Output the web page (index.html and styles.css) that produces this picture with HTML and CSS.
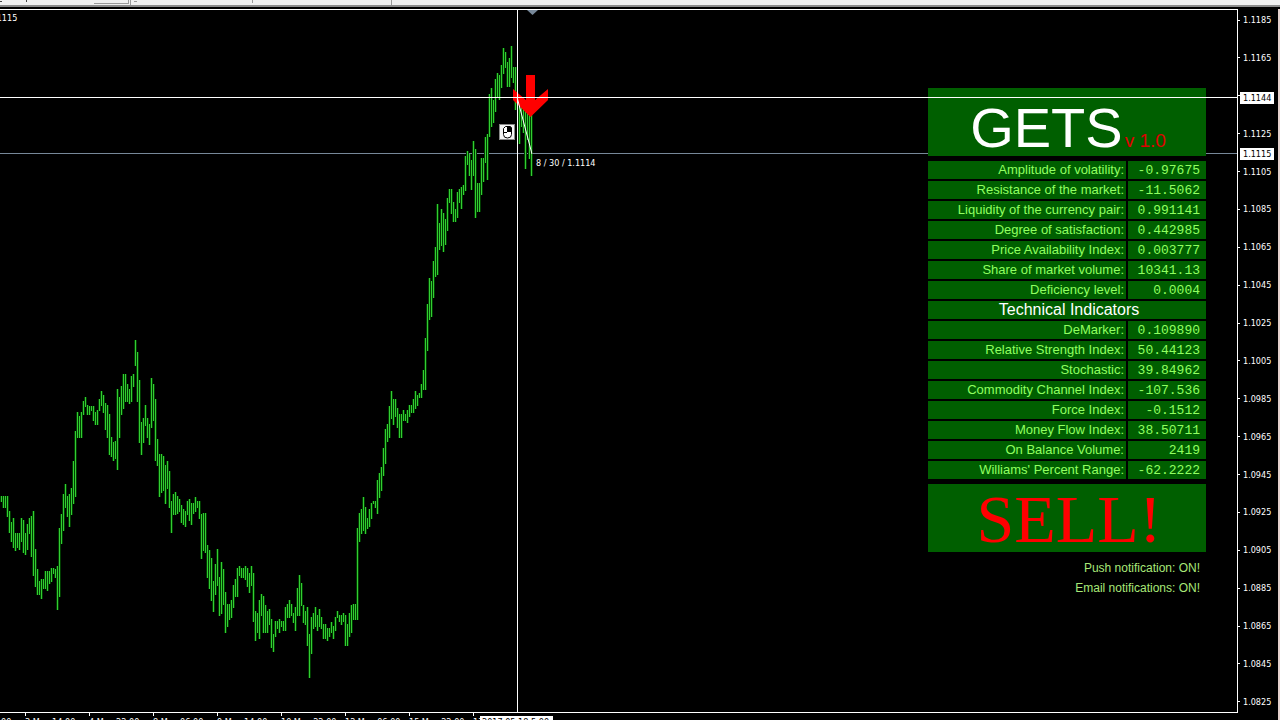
FILE: index.html
```
<!DOCTYPE html>
<html lang="en">
<head>
    <meta charset="UTF-8">
    <meta name="viewport" content="width=device-width, initial-scale=1.0">
    <title>GETS v 1.0</title>
    <link rel="stylesheet" href="styles.css">
</head>
<body>

    <!-- Bottom edge of the toolbar -->
    <div class="toolbar">
        <svg class="toolbar-marks" width="400" height="5" shape-rendering="crispEdges">
            <rect x="0" y="1" width="2" height="1" fill="#444"/>
            <rect x="26" y="0" width="1" height="2" fill="#444"/>
            <path d="M94 3.5H128.500V0" fill="none" stroke="#999"/>
            <path d="M130.500 0V5M252.500 0V3M391.500 0V5" stroke="#999"/>
            <rect x="134" y="1" width="3" height="1" fill="#999"/>
        </svg>
    </div>

    <div class="workspace">
        <main class="plot">
            <span class="ohlc">1.1115</span>

            <div class="bid-line"></div>

            <svg class="bars" width="620" height="702" viewBox="0 10 620 702">
                <path id="glow" class="bar-glow"/>
                <path id="bars" class="bar-path"/>
                <path d="M527 10H538L532.500 15Z" fill="#778899"/>
                <path d="M526 75H535V100L548 89V100L530.500 117L513 100V89L526 100Z" fill="#f00"/>
                <path d="M517 97L532 154" stroke="#fff"/>
                <!-- Mouse badge -->
                <rect x="499.500" y="124.500" width="15" height="15" fill="#f4f4f4" stroke="#888"/>
                <path d="M503.500 128.500L505.500 126.500H510.500L511.500 127.500V134.500Q511.500 138 507.500 138Q503.500 138 503.500 134.500Z" fill="#fff" stroke="#000"/>
                <path d="M507 127H511V132H507Z" fill="#000"/>
                <path d="M504 132.500H507" stroke="#000"/>
            </svg>

            <span class="measure">8 / 30 / 1.1114</span>

            <!-- Indicator panel -->
            <section class="panel">
                <h1 class="panel-title">GETS<small>v 1.0</small></h1>
                <table class="readings">
                    <tbody>
                        <tr><th scope="row">Amplitude of volatility:</th><td>-0.97675</td></tr>
                        <tr><th scope="row">Resistance of the market:</th><td>-11.5062</td></tr>
                        <tr><th scope="row">Liquidity of the currency pair:</th><td>0.991141</td></tr>
                        <tr><th scope="row">Degree of satisfaction:</th><td>0.442985</td></tr>
                        <tr><th scope="row">Price Availability Index:</th><td>0.003777</td></tr>
                        <tr><th scope="row">Share of market volume:</th><td>10341.13</td></tr>
                        <tr><th scope="row">Deficiency level:</th><td>0.0004</td></tr>
                        <tr><th class="group" colspan="2">Technical Indicators</th></tr>
                        <tr><th scope="row">DeMarker:</th><td>0.109890</td></tr>
                        <tr><th scope="row">Relative Strength Index:</th><td>50.44123</td></tr>
                        <tr><th scope="row">Stochastic:</th><td>39.84962</td></tr>
                        <tr><th scope="row">Commodity Channel Index:</th><td>-107.536</td></tr>
                        <tr><th scope="row">Force Index:</th><td>-0.1512</td></tr>
                        <tr><th scope="row">Money Flow Index:</th><td>38.50711</td></tr>
                        <tr><th scope="row">On Balance Volume:</th><td>2419</td></tr>
                        <tr><th scope="row">Williams' Percent Range:</th><td>-62.2222</td></tr>
                    </tbody>
                </table>
                <div class="signal">SELL!</div>
                <p class="notice">Push notification: ON!</p>
                <p class="notice">Email notifications: ON!</p>
            </section>

            <!-- Crosshair -->
            <div class="cross-h"></div>
            <div class="cross-v"></div>
        </main>

        <aside class="price-axis">
            <ul class="prices">
                <li>1.1185</li>
                <li>1.1165</li>
                <li></li>
                <li>1.1125</li>
                <li>1.1105</li>
                <li>1.1085</li>
                <li>1.1065</li>
                <li>1.1045</li>
                <li>1.1025</li>
                <li>1.1005</li>
                <li>1.0985</li>
                <li>1.0965</li>
                <li>1.0945</li>
                <li>1.0925</li>
                <li>1.0905</li>
                <li>1.0885</li>
                <li>1.0865</li>
                <li>1.0845</li>
                <li>1.0825</li>
            </ul>
            <span class="price-tag tag-cross">1.1144</span>
            <span class="price-tag tag-bid">1.1115</span>
        </aside>

        <footer class="time-axis">
            <span>2 May 06:00</span>
            <span>3 May 14:00</span>
            <span>4 May 22:00</span>
            <span>8 May 06:00</span>
            <span>9 May 14:00</span>
            <span>10 May 22:00</span>
            <span>12 May 06:00</span>
            <span>15 May 22:00</span>
            <span>17</span>
            <span class="time-tag">2017.05.18 5:00</span>
        </footer>
    </div>

    <script src="chart.js"></script>
</body>
</html>
```
FILE: styles.css
```
/* General */
* {
    box-sizing: border-box;
}

body {
    display: flex;
    flex-direction: column;
    height: 100vh;
    margin: 0;
    overflow: hidden;
    background: #000;
    color: #fff;
    font-family: "Liberation Sans", Arial, sans-serif;
}

/* Toolbar */
.toolbar {
    flex: none;
    height: 7px;
    margin-bottom: 2px;
    background: #f0f0f0;
    border-bottom: 2px solid #8c8c8c;
}

.toolbar-marks {
    display: block;
}

/* Workspace */
.workspace {
    flex: 1;
    display: grid;
    grid-template-columns: 1fr 42px;
    grid-template-rows: 1fr 7px;
    min-height: 0;
}

.plot {
    position: relative;
    display: flex;
    justify-content: flex-end;
    padding: 78px 31px 0 0;
    border: 1px solid #fff;
    border-left: 0;
    overflow: hidden;
}

.bars {
    position: absolute;
    left: 0;
    top: 0;
}

.bar-path,
.bar-glow {
    fill: none;
    stroke: #32cd32;
    shape-rendering: crispEdges;
}

.bar-glow {
    stroke: #003c00;
    stroke-width: 3px;
}

.ohlc,
.measure {
    position: absolute;
    font-family: "DejaVu Sans Condensed", "Noto Sans", sans-serif;
    font-size: 9px;
    line-height: 12px;
}

.ohlc {
    left: -11px;
    top: 2px;
}

.measure {
    left: 536px;
    top: 147px;
}

.bid-line,
.cross-h {
    position: absolute;
    left: 0;
    right: 0;
    height: 1px;
}

.bid-line {
    top: 143px;
    background: #778899;
}

.cross-h {
    top: 87px;
    background: #fff;
}

.cross-v {
    position: absolute;
    left: 517px;
    top: 0;
    bottom: 0;
    width: 1px;
    background: #fff;
}

/* Indicator panel */
.panel {
    position: relative;
    width: 278px;
}

.panel-title,
.signal {
    height: 68px;
    margin: 0;
    background: #005f00;
    text-align: center;
}

.panel-title {
    margin-bottom: 5px;
    padding-left: 2px;
    font-size: 56px;
    font-weight: normal;
    line-height: 80px;
}

.panel-title small {
    margin-left: 2px;
    color: #e00000;
    font-size: 19px;
}

.readings {
    width: 100%;
    border-spacing: 0;
    table-layout: fixed;
    color: #90ff60;
    font-size: 13px;
    line-height: 18px;
    text-align: right;
}

.readings th,
.readings td {
    height: 20px;
    padding: 0;
    background: #005f00;
    border-bottom: 2px solid #000;
    font-weight: normal;
    white-space: nowrap;
}

.readings th {
    width: 200px;
    padding-right: 2px;
    border-right: 2px solid #000;
    text-align: right;
}

.readings td {
    padding: 2px 6px 0 0;
    font-family: "Liberation Mono", "Courier New", monospace;
    line-height: 16px;
}

.readings .group {
    padding-left: 6px;
    border-right: 0;
    color: #fff;
    font-size: 16px;
    text-align: center;
}

.signal {
    margin: 3px 0 6px;
    padding-left: 4px;
    color: #f00;
    font-family: "Liberation Serif", "Times New Roman", serif;
    font-size: 68px;
    line-height: 70px;
}

.notice {
    margin: 0;
    padding-right: 6px;
    color: #a8e878;
    font-size: 12px;
    line-height: 20px;
    text-align: right;
}

/* Price axis */
.price-axis {
    position: relative;
    grid-row: span 2;
    border-right: 2px solid #e4d0cc;
    font-family: "DejaVu Sans Condensed", "Noto Sans", sans-serif;
    font-size: 9px;
    line-height: 12px;
}

.prices {
    display: flex;
    flex-direction: column;
    justify-content: space-between;
    height: 100%;
    margin: 0;
    padding: 5px 0 12px;
    list-style: none;
}

.prices li {
    display: flex;
    align-items: center;
    gap: 3px;
    height: 12px;
}

.prices li::before {
    content: "";
    width: 2px;
    height: 1px;
    background: #fff;
}

.price-tag {
    position: absolute;
    left: 2px;
    width: 34px;
    padding-left: 3px;
    background: #fff;
    color: #000;
}

.tag-cross {
    top: 83px;
}

.tag-bid {
    top: 139px;
}

/* Time axis */
.time-axis {
    position: relative;
    display: flex;
    margin-left: -39px;
    overflow: hidden;
    font-family: "DejaVu Sans Condensed", "Noto Sans", sans-serif;
    font-size: 9px;
    line-height: 12px;
}

.time-axis span {
    flex: none;
    width: 64px;
    padding-top: 3px;
    white-space: nowrap;
    background: linear-gradient(#fff, #fff) no-repeat 0 0 / 1px 3px;
}

.time-axis .time-tag {
    position: absolute;
    left: 519px;
    top: 3px;
    width: 73px;
    padding: 0 2px;
    background: #fff;
    color: #000;
}
```
FILE: chart.js
```
// [high, low] of every bar, left to right
const bars = [
    [496,502],[496,508],[496,508],[496,517],[511,533],[522,542],[518,548],[533,551],[533,548],[533,550],
    [518,542],[520,553],[533,555],[524,550],[518,534],[516,557],[511,576],[549,587],[569,595],[581,595],
    [579,599],[579,589],[571,589],[571,591],[571,584],[568,582],[568,574],[569,578],[566,610],[528,597],
    [514,544],[494,531],[484,508],[496,517],[494,527],[488,515],[461,504],[431,497],[412,438],[416,438],
    [412,438],[401,415],[397,407],[405,415],[406,415],[406,411],[406,421],[412,425],[410,425],[399,411],
    [391,406],[395,413],[403,430],[405,438],[414,455],[437,457],[442,461],[441,459],[389,470],[397,438],
    [386,415],[374,409],[374,402],[384,402],[389,404],[376,402],[374,387],[340,366],[352,402],[380,443],
    [422,455],[418,443],[405,426],[418,438],[424,445],[378,428],[384,421],[399,461],[439,466],[454,497],
    [454,493],[456,491],[465,504],[461,489],[471,508],[501,533],[494,515],[492,515],[496,514],[499,512],
    [505,523],[509,525],[511,527],[501,515],[499,521],[503,525],[503,514],[497,512],[501,508],[501,519],
    [514,559],[513,551],[513,553],[545,578],[550,589],[558,601],[581,612],[564,595],[549,586],[577,616],
    [562,614],[569,605],[592,633],[604,627],[604,620],[600,618],[585,608],[579,597],[568,597],[566,576],
    [568,578],[568,578],[566,580],[568,587],[573,593],[566,586],[573,622],[611,641],[613,633],[600,639],
    [594,616],[596,633],[605,633],[611,633],[609,625],[619,648],[634,652],[621,637],[621,629],[619,633],
    [621,627],[621,631],[607,631],[604,618],[600,618],[604,616],[613,623],[607,631],[588,616],[575,616],
    [583,606],[605,623],[611,625],[607,646],[634,678],[617,654],[613,629],[607,627],[615,631],[609,627],
    [617,629],[624,639],[624,639],[628,641],[628,637],[622,633],[626,639],[617,631],[611,618],[615,622],
    [615,625],[613,622],[615,646],[624,646],[613,637],[605,633],[604,620],[604,620],[528,620],[513,542],
    [509,534],[497,531],[507,534],[518,529],[509,527],[503,519],[501,504],[501,508],[480,514],[473,498],
    [467,491],[448,476],[429,464],[424,442],[406,438],[391,419],[399,425],[399,417],[408,428],[414,438],
    [414,438],[410,421],[414,421],[410,423],[405,417],[405,413],[399,413],[391,409],[395,406],[393,398],
    [384,398],[370,390],[338,390],[304,351],[278,320],[281,317],[261,298],[247,277],[204,275],[223,250],
    [209,246],[213,252],[219,245],[198,231],[189,203],[189,214],[202,222],[209,222],[192,218],[189,203],
    [187,209],[185,195],[156,191],[151,165],[154,176],[160,190],[141,176],[149,218],[183,212],[183,212],
    [158,195],[158,182],[137,163],[134,180],[94,137],[88,127],[100,123],[79,112],[73,97],[75,100],
    [65,88],[48,74],[52,68],[62,87],[58,87],[46,78],[67,83],[67,110],[97,110],[100,144],
    [102,127],[102,133],[110,169],[110,140],[113,159],[115,176]
];

const step = 2;
const path = bars.map(([high, low], i) => `M${i * step + 1.5} ${high}V${low}`).join("");

document.getElementById("glow").setAttribute("d", path);
document.getElementById("bars").setAttribute("d", path);
```
